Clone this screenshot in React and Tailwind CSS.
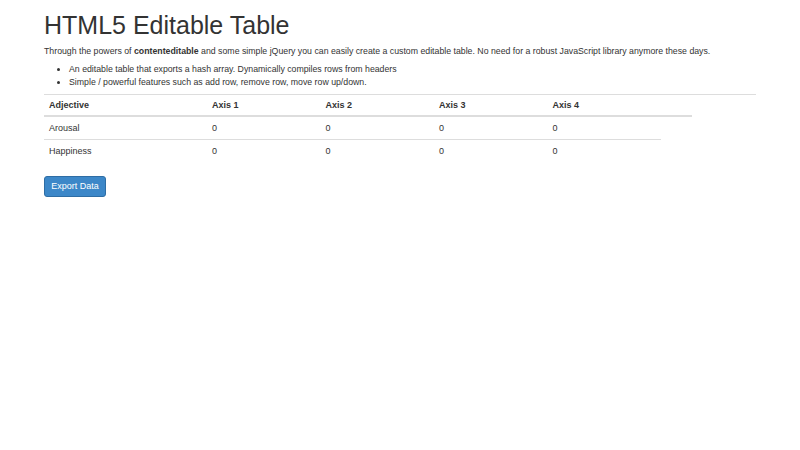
const columns = ["Adjective", "Axis 1", "Axis 2", "Axis 3", "Axis 4"];

const rows = [
  ["Arousal", "0", "0", "0", "0"],
  ["Happiness", "0", "0", "0", "0"],
];

function Cell({ children, first, bold }) {
  return (
    <div
      className={`${first ? "w-[163px]" : "w-[113.5px]"} shrink-0 px-[5px] ${
        bold ? "font-bold" : ""
      }`}
    >
      {children}
    </div>
  );
}

export default function App() {
  return (
    <div
      className="min-h-[450px] w-full bg-white px-[44px] text-[#333] text-[8.75px] leading-[13px]"
      style={{ fontFamily: '"Liberation Sans", Arial, sans-serif' }}
    >
      <h1 className="pt-[13px] text-[25px] leading-[25px] font-normal">
        HTML5 Editable Table
      </h1>

      <p className="mt-[7px]">
        Through the powers of <b>contenteditable</b> and some simple jQuery you
        can easily create a custom editable table. No need for a robust
        JavaScript library anymore these days.
      </p>

      <ul className="mt-[5px] list-disc pl-[25px]">
        <li>An editable table that exports a hash array. Dynamically compiles rows from headers</li>
        <li>Simple / powerful features such as add row, remove row, move row up/down.</li>
      </ul>

      <div className="mt-[5px] border-t border-[#ddd] text-[9px]">
        <div className="flex h-[22px] w-[648px] items-center border-b-2 border-[#ddd] pt-px">
          {columns.map((c, i) => (
            <Cell key={c} first={i === 0} bold>
              {c}
            </Cell>
          ))}
        </div>
        {rows.map((r, ri) => (
          <div
            key={r[0]}
            className={`flex h-[23px] w-[617px] items-center ${
              ri < rows.length - 1 ? "border-b border-[#ddd]" : ""
            }`}
          >
            {r.map((v, i) => (
              <Cell key={i} first={i === 0}>
                {v}
              </Cell>
            ))}
          </div>
        ))}
      </div>

      <button className="mt-[13px] h-[21px] w-[62px] rounded-[3px] border border-[#2e6da4] bg-[#3c87c8] text-[9px] text-white">
        Export Data
      </button>
    </div>
  );
}
